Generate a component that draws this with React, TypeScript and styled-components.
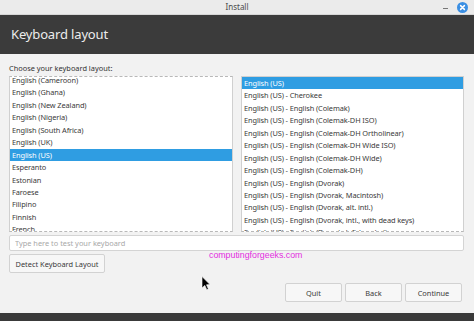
import React from "react";
import styled, { createGlobalStyle } from "styled-components";

const Global = createGlobalStyle`
  html, body { margin: 0; padding: 0; }
  body { font-family: "Noto Sans", "DejaVu Sans", sans-serif; }
  * { box-sizing: border-box; }
`;

const Window = styled.div`
  position: relative;
  width: 474px;
  height: 321px;
  display: flex;
  flex-direction: column;
  overflow: hidden;
  background: #f2f2f2;
`;

const TitleBar = styled.div`
  height: 15px;
  flex: none;
  display: grid;
  grid-template-columns: 1fr auto 1fr;
  align-items: center;
  background: #ebebeb;
  border-bottom: 1px solid #d6d6d6;
  font-size: 8px;
  color: #4a4a4a;
`;

const TitleText = styled.div`
  grid-column: 2;
  line-height: 14px;
`;

const Controls = styled.div`
  grid-column: 3;
  justify-self: end;
  display: flex;
  align-items: center;
  gap: 9px;
  padding-right: 6px;
`;

const MinBtn = styled.div`
  width: 5px;
  height: 1px;
  background: #777;
  margin-top: 3px;
`;

const Header = styled.div`
  height: 39px;
  flex: none;
  display: flex;
  align-items: center;
  padding-left: 11px;
  background: #3b3b3b;
  color: #ececec;
  font-size: 13px;
  letter-spacing: -0.15px;
  padding-bottom: 1px;
`;

const Content = styled.div`
  flex: 1;
  display: flex;
  flex-direction: column;
  padding: 9px 10px 0 9px;
  background: #f2f2f2;
`;

const Label = styled.div`
  font-size: 7.4px;
  line-height: 10px;
  color: #333;
  margin-bottom: 3px;
`;

const Lists = styled.div`
  display: grid;
  grid-template-columns: 224px 223px;
  column-gap: 8px;
  height: 156px;
`;

const ListBox = styled.div<{ $dashTop?: boolean }>`
  background: #fff;
  border: 1px solid #d0d0d0;
  border-top: 1px ${(p) => (p.$dashTop ? "dashed #b8b8b8" : "solid #d0d0d0")};
  border-bottom: 1px dashed #b8b8b8;
  overflow: hidden;
`;

const ListInner = styled.div<{ $offset: number }>`
  margin-top: ${(p) => p.$offset}px;
`;

const Row = styled.div<{ $selected?: boolean }>`
  height: 12.45px;
  line-height: 12.45px;
  padding-left: 2px;
  font-size: 7.4px;
  letter-spacing: -0.1px;
  white-space: nowrap;
  color: ${(p) => (p.$selected ? "#fff" : "#3a3a3a")};
  background: ${(p) => (p.$selected ? "#2f9de2" : "transparent")};
`;

const TestInput = styled.input`
  margin-top: 3px;
  height: 16px;
  width: 455px;
  border: 1px solid #d4d4d4;
  border-radius: 2px;
  background: #fff;
  padding: 0 5px;
  font-family: inherit;
  font-size: 7.4px;
  color: #333;
  outline: none;
  &::placeholder { color: #a8a8a8; }
`;

const Button = styled.button<{ $w: number }>`
  width: ${(p) => p.$w}px;
  height: 19px;
  border: 1px solid #d2d2d2;
  border-radius: 2px;
  background: #f7f7f7;
  font-family: inherit;
  font-size: 7.4px;
  color: #3a3a3a;
  padding: 0;
`;

const DetectRow = styled.div`
  margin-top: 3px;
  display: flex;
`;

const Footer = styled.div`
  margin-top: 10px;
  display: flex;
  justify-content: flex-end;
  gap: 3px;
  padding-right: 2px;
`;

const BottomStrip = styled.div`
  height: 8px;
  flex: none;
  background: #3a3a3a;
`;

const Watermark = styled.div`
  position: absolute;
  left: 209px;
  top: 250px;
  font-family: "Liberation Sans", Arial, sans-serif;
  font-size: 8.8px;
  color: #e22ee0;
`;

const Cursor = styled.svg`
  position: absolute;
  left: 201px;
  top: 276px;
`;

const leftItems = [
  "English (Cameroon)",
  "English (Ghana)",
  "English (New Zealand)",
  "English (Nigeria)",
  "English (South Africa)",
  "English (UK)",
  "English (US)",
  "Esperanto",
  "Estonian",
  "Faroese",
  "Filipino",
  "Finnish",
  "French",
];

const rightItems = [
  "English (US)",
  "English (US) - Cherokee",
  "English (US) - English (Colemak)",
  "English (US) - English (Colemak-DH ISO)",
  "English (US) - English (Colemak-DH Ortholinear)",
  "English (US) - English (Colemak-DH Wide ISO)",
  "English (US) - English (Colemak-DH Wide)",
  "English (US) - English (Colemak-DH)",
  "English (US) - English (Dvorak)",
  "English (US) - English (Dvorak, Macintosh)",
  "English (US) - English (Dvorak, alt. intl.)",
  "English (US) - English (Dvorak, intl., with dead keys)",
  "English (US) - English (Dvorak, left-handed)",
];

export default function App() {
  return (
    <>
      <Global />
      <Window>
        <TitleBar>
          <TitleText>Install</TitleText>
          <Controls>
            <MinBtn />
            <svg width="11" height="11" viewBox="0 0 11 11">
              <circle cx="5.5" cy="5.5" r="5.5" fill="#3b8fe3" />
              <path d="M3.6 3.6 L7.4 7.4 M7.4 3.6 L3.6 7.4" stroke="#fff" strokeWidth="1.5" strokeLinecap="round" />
            </svg>
          </Controls>
        </TitleBar>
        <Header>Keyboard layout</Header>
        <Content>
          <Label>Choose your keyboard layout:</Label>
          <Lists>
            <ListBox $dashTop>
              <ListInner $offset={-3}>
                {leftItems.map((t) => (
                  <Row key={t} $selected={t === "English (US)"}>{t}</Row>
                ))}
              </ListInner>
            </ListBox>
            <ListBox>
              <ListInner $offset={0}>
                {rightItems.map((t, i) => (
                  <Row key={t} $selected={i === 0}>{t}</Row>
                ))}
              </ListInner>
            </ListBox>
          </Lists>
          <TestInput placeholder="Type here to test your keyboard" />
          <DetectRow>
            <Button $w={96}>Detect Keyboard Layout</Button>
          </DetectRow>
          <Footer>
            <Button $w={57}>Quit</Button>
            <Button $w={57}>Back</Button>
            <Button $w={57}>Continue</Button>
          </Footer>
        </Content>
        <BottomStrip />
        <Watermark>computingforgeeks.com</Watermark>
        <Cursor width="10" height="15" viewBox="0 0 10 15">
          <path d="M1 0.5 L1 12 L3.8 9.4 L5.8 13.8 L7.4 13 L5.5 8.8 L9 8.6 Z" fill="#000" stroke="#fff" strokeWidth="0.6" />
        </Cursor>
      </Window>
    </>
  );
}
